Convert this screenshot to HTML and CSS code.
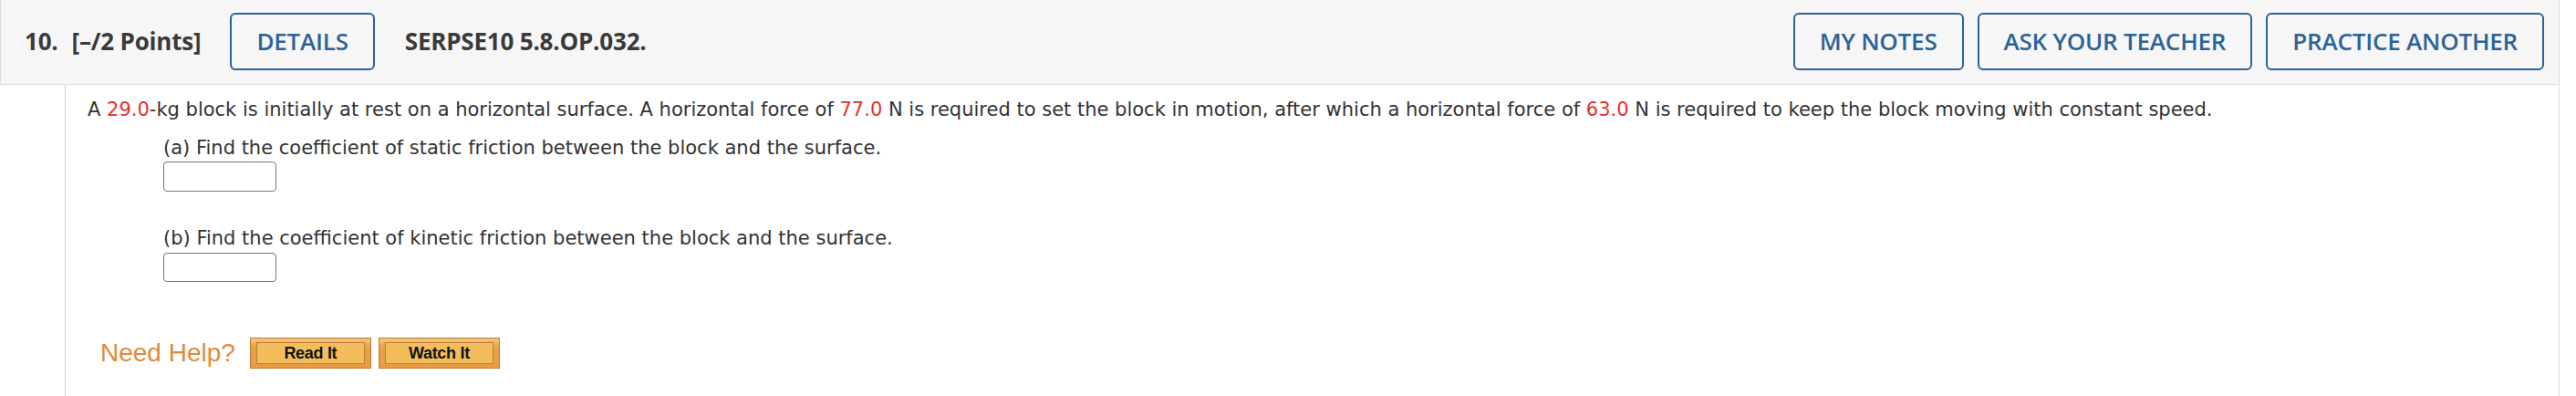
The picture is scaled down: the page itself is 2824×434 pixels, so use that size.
FILE: index.html
```html
<!DOCTYPE html>
<html>
<head>
<meta charset="utf-8">
<link rel="stylesheet" href="styles.css">
</head>
<body>
<div class="question">
  <div class="q-header">
    <div class="q-title"><span class="q-num">10.</span><span class="q-points">[–/2 Points]</span></div>
    <button class="q-btn">DETAILS</button>
    <div class="q-code">SERPSE10 5.8.OP.032.</div>
    <div class="q-actions">
      <button class="q-btn">MY NOTES</button>
      <button class="q-btn">ASK YOUR TEACHER</button>
      <button class="q-btn">PRACTICE ANOTHER</button>
    </div>
  </div>
  <div class="q-body">
    <p class="q-text">A <span class="red">29.0</span>-kg block is initially at rest on a horizontal surface. A horizontal force of <span class="red">77.0</span> N is required to set the block in motion, after which a horizontal force of <span class="red">63.0</span> N is required to keep the block moving with constant speed.</p>
    <div class="part part-a">
      <p class="part-text">(a) Find the coefficient of static friction between the block and the surface.</p>
      <input class="answer" type="text">
    </div>
    <div class="part part-b">
      <p class="part-text">(b) Find the coefficient of kinetic friction between the block and the surface.</p>
      <input class="answer" type="text">
    </div>
    <div class="help">
      <span class="help-label">Need Help?</span>
      <span class="help-btn"><span class="help-inner">Read It</span></span>
      <span class="help-btn"><span class="help-inner">Watch It</span></span>
    </div>
  </div>
</div>
</body>
</html>
```

FILE: styles.css
```css
html, body {
  margin: 0;
  padding: 0;
  background: #ffffff;
}
.question {
  width: 2806px;
}
.q-header {
  box-sizing: border-box;
  height: 93px;
  display: flex;
  align-items: center;
  background: #f6f6f6;
  border: 1px solid #dcdcdc;
  border-top: none;
  padding: 0 16px 2px 26px;
  font-family: "Open Sans", "Liberation Sans", sans-serif;
}
.q-title {
  font-weight: 700;
  font-size: 26px;
  color: #3a3a3a;
  margin-right: 32px;
  letter-spacing: -0.2px;
}
.q-num {
  margin-right: 15px;
}
.q-code {
  font-weight: 700;
  font-size: 26px;
  color: #3a3a3a;
  margin-left: 33px;
  letter-spacing: -0.2px;
}
.q-btn {
  box-sizing: border-box;
  height: 63px;
  padding: 0 27px;
  border: 2.5px solid #2c6398;
  border-radius: 6px;
  background: transparent;
  color: #2c6398;
  font-family: "Open Sans", "Liberation Sans", sans-serif;
  font-weight: 600;
  font-size: 26px;
  letter-spacing: -0.2px;
}
.q-actions {
  margin-left: auto;
  display: flex;
  gap: 15px;
}
.q-body {
  margin-left: 71px;
  border-left: 1px solid #cfcfcf;
  border-right: 1px solid #dcdcdc;
  height: 341px;
  padding: 13px 0 0 24px;
  font-family: "DejaVu Sans", Verdana, sans-serif;
  font-size: 21px;
  color: #333333;
  box-sizing: border-box;
}
.q-text {
  margin: 0;
  line-height: 28px;
}
.red {
  color: #e8302a;
}
.part {
  margin-left: 83px;
}
.part-text {
  margin: 0;
  line-height: 28px;
}
.part-a {
  margin-top: 14px;
}
.part-b {
  margin-top: 37px;
}
.answer {
  display: block;
  box-sizing: border-box;
  width: 124px;
  height: 33px;
  margin: 1px 0 0 0;
  border: 1px solid #767676;
  border-radius: 4px;
  background: #ffffff;
  padding: 0;
}
.part-b .answer {
  margin-top: 2px;
  height: 32px;
}
.help {
  display: flex;
  align-items: center;
  margin-top: 61px;
  margin-left: 14px;
  gap: 8px;
}
.help-label {
  font-family: "Liberation Sans", Arial, sans-serif;
  font-size: 28px;
  color: #e1893a;
  margin-right: 8px;
}
.help-btn {
  box-sizing: border-box;
  display: flex;
  width: 133px;
  height: 34px;
  padding: 4px 6px;
  border: 1px solid #bf792f;
  background: linear-gradient(#f7c77a, #e9a04a 30%, #e99c45);
}
.help-inner {
  flex: 1;
  display: flex;
  align-items: center;
  justify-content: center;
  border: 1px solid #b97d3a;
  background: #f4bd5c;
  font-family: "Liberation Sans", Arial, sans-serif;
  font-weight: 700;
  font-size: 18px;
  letter-spacing: -0.3px;
  color: #111111;
}
```
